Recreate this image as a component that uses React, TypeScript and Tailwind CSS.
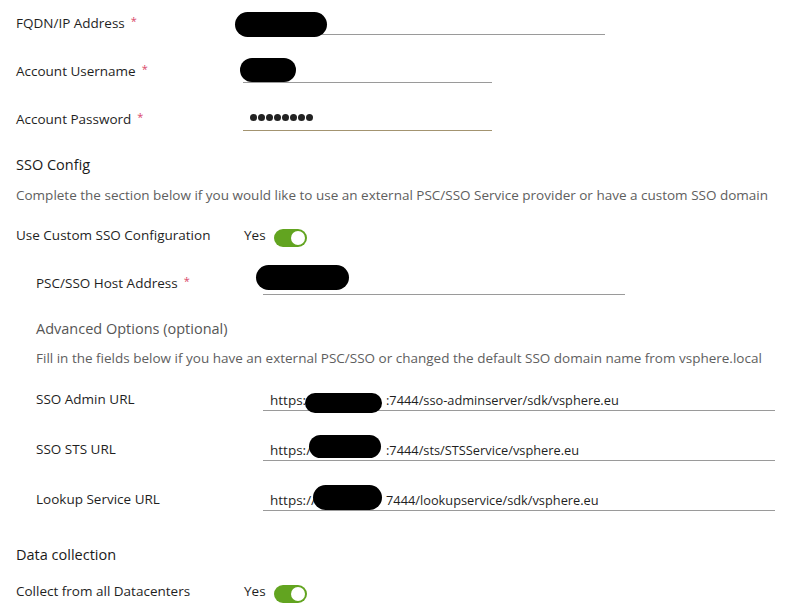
import React from "react";

const font = { fontFamily: '"Open Sans", "Noto Sans", sans-serif' };

function Req() {
  return <span className="ml-[6px] text-[11px] text-[#d9486a] relative -top-[3px]">*</span>;
}

function Blob({ cls }: { cls: string }) {
  return <div className={"absolute bg-black rounded-full " + cls} />;
}

function Toggle() {
  return (
    <div className="flex items-center h-6">
      <span className="text-[13.5px] text-[#1f1f1f] mr-[8px]">Yes</span>
      <div className="relative mt-[5px] w-[33px] h-[18px] rounded-full bg-[#62a420]">
        <div className="absolute right-[2px] top-[2px] w-[14px] h-[14px] rounded-full bg-white" />
      </div>
    </div>
  );
}

function Row({
  label,
  req,
  inputW,
  children,
  cls,
  line = "border-[#9a9a9a]",
}: {
  label: string;
  req?: boolean;
  inputW: string;
  children?: React.ReactNode;
  cls: string;
  line?: string;
}) {
  return (
    <div className={"flex items-center h-6 " + cls}>
      <div className="w-[227px] text-[13.5px] text-[#1f1f1f] shrink-0 pt-[1px]">
        {label}
        {req && <Req />}
      </div>
      <div className={"relative h-6 border-b " + line + " " + inputW}>{children}</div>
    </div>
  );
}

function Url({ pre, post, blob }: { pre: string; post: string; blob: string }) {
  return (
    <>
      <div className="absolute left-[7px] top-[3px] flex items-baseline text-[13.5px] text-[#1f1f1f] whitespace-nowrap">
        <span className="inline-block w-[116px]">{pre}</span>
        <span className="text-[12.8px]">{post}</span>
      </div>
      <Blob cls={blob} />
    </>
  );
}

export default function App() {
  return (
    <div className="w-[802px] h-[612px] bg-white overflow-hidden pl-4 pt-[1px]" style={font}>
      <Row label="FQDN/IP Address" req inputW="w-[362px]" cls="mt-[10px]">
        <Blob cls="-left-[8px] top-[1px] w-[92px] h-[25px]" />
      </Row>
      <Row label="Account Username" req inputW="w-[249px]" cls="mt-6">
        <Blob cls="-left-[3px] -top-[1px] w-[56px] h-[24px]" />
      </Row>
      <Row label="Account Password" req inputW="w-[249px]" cls="mt-6" line="border-[#a39470]">
        <div className="absolute left-[7px] top-[7px] flex gap-[1.5px]">
          {Array.from({ length: 8 }).map((_, i) => (
            <div key={i} className="w-[6.5px] h-[6.5px] rounded-full bg-[#222]" />
          ))}
        </div>
      </Row>

      <div className="mt-6 h-5 flex items-center text-[14.5px] font-medium text-[#1a1a1a]">SSO Config</div>
      <div className="mt-[11px] h-[18px] flex items-center text-[13.5px] text-[#5e5e5e] whitespace-nowrap">
        Complete the section below if you would like to use an external PSC/SSO Service provider or have a custom SSO domain
      </div>
      <div className="mt-[19px] flex items-center h-6">
        <div className="w-[228px] text-[13.5px] text-[#1f1f1f]">Use Custom SSO Configuration</div>
        <Toggle />
      </div>

      <div className="pl-5">
        <Row label="PSC/SSO Host Address" req inputW="w-[362px]" cls="mt-6">
          <Blob cls="-left-[7px] -top-[6px] w-[93px] h-[25px]" />
        </Row>
        <div className="mt-6 h-5 flex items-center text-[14.5px] font-medium text-[#565656]">Advanced Options (optional)</div>
        <div className="mt-[10px] h-[18px] flex items-center text-[13.5px] text-[#5e5e5e] whitespace-nowrap">
          Fill in the fields below if you have an external PSC/SSO or changed the default SSO domain name from vsphere.local
        </div>
        <Row label="SSO Admin URL" inputW="w-[512px]" cls="mt-5">
          <Url pre="https:" post=":7444/sso-adminserver/sdk/vsphere.eu" blob="left-[42px] top-[6px] w-[77px] h-[20px]" />
        </Row>
        <Row label="SSO STS URL" inputW="w-[512px]" cls="mt-[26px]">
          <Url pre="https:/" post=":7444/sts/STSService/vsphere.eu" blob="left-[46px] -top-[2px] w-[72px] h-[23px]" />
        </Row>
        <Row label="Lookup Service URL" inputW="w-[512px]" cls="mt-[26px]">
          <Url pre="https://" post="7444/lookupservice/sdk/vsphere.eu" blob="left-[50px] -top-[2px] w-[69px] h-[25px]" />
        </Row>
      </div>

      <div className="mt-[34px] h-5 flex items-center text-[14.5px] font-medium text-[#1a1a1a]">Data collection</div>
      <div className="mt-[14px] flex items-center h-6">
        <div className="w-[228px] text-[13.5px] text-[#1f1f1f]">Collect from all Datacenters</div>
        <Toggle />
      </div>
    </div>
  );
}
